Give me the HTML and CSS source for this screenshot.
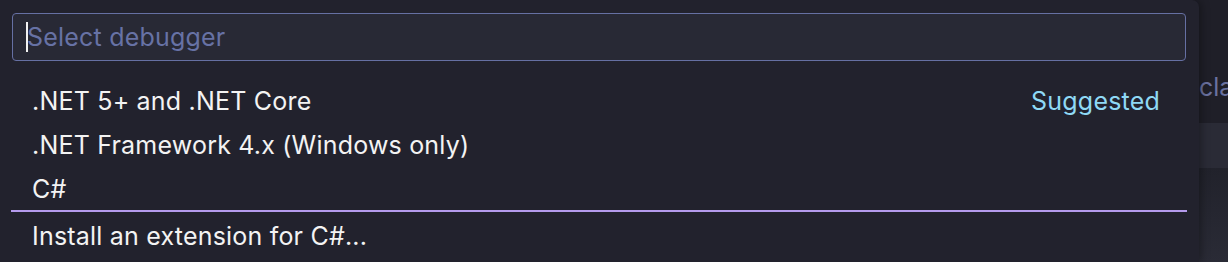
FILE: index.html
```html
<!DOCTYPE html>
<html>
<head>
<meta charset="utf-8">
<link rel="stylesheet" href="styles.css">
</head>
<body>
<div class="screen">
  <div class="panel">
    <div class="input-wrap">
      <div class="input"><span class="caret"></span><span class="placeholder">Select debugger</span></div>
    </div>
    <ul class="list">
      <li class="item"><span>.NET 5+ and .NET Core</span><span class="tag">Suggested</span></li>
      <li class="item"><span>.NET Framework 4.x (Windows only)</span></li>
      <li class="item"><span>C#</span></li>
      <li class="sep"></li>
      <li class="item"><span>Install an extension for C#...</span></li>
    </ul>
  </div>
  <div class="side">
    <div class="side-top"><span class="side-text">cla</span></div>
    <div class="side-band"></div>
    <div class="side-bottom"></div>
  </div>
</div>
</body>
</html>
```

FILE: styles.css
```css
* { box-sizing: border-box; }
html, body {
  margin: 0;
  padding: 0;
  background: #1f1f29;
  width: 1228px;
  height: 262px;
  overflow: hidden;
  font-family: Inter, "Noto Sans", sans-serif;
}
.screen {
  display: flex;
  width: 1228px;
  height: 262px;
}
.panel {
  width: 1199px;
  height: 262px;
  flex: none;
  background: #22222d;
  border-top-right-radius: 7px;
  box-shadow: 2px 0 8px rgba(0,0,0,0.35);
  position: relative;
  z-index: 1;
}
.input-wrap {
  padding: 13px 13px 0 12px;
}
.input {
  height: 48px;
  border: 1px solid #6670a3;
  border-radius: 4px;
  background: #282935;
  display: flex;
  align-items: center;
  padding-left: 13px;
}
.caret {
  width: 2px;
  height: 30px;
  background: #f2f2f2;
  margin-right: -1px;
}
.placeholder {
  color: #6772a5;
  font-size: 25px;
  letter-spacing: 0.2px;
}
.list {
  list-style: none;
  margin: 18px 0 0 0;
  padding: 0 39px 0 32px;
}
.item {
  height: 44px;
  display: flex;
  align-items: center;
  justify-content: space-between;
  color: #f3f3f3;
  font-size: 25px;
  letter-spacing: 0.2px;
}
.tag {
  color: #8fd9f5;
}
.sep {
  height: 2px;
  background: #b59bec;
  margin: -1px -27px 0 -21px;
}
.item:last-child {
  height: 48px;
}
.side {
  flex: 1;
  display: flex;
  flex-direction: column;
  overflow: hidden;
}
.side-top {
  height: 123px;
  background: #1f1f28;
  padding-top: 72px;
}
.side-text {
  color: #6a72a0;
  font-size: 25px;
  white-space: nowrap;
}
.side-band {
  height: 45px;
  background: #2a2b36;
}
.side-bottom {
  flex: 1;
  background: linear-gradient(#21222b, #2a2b36);
}
```
